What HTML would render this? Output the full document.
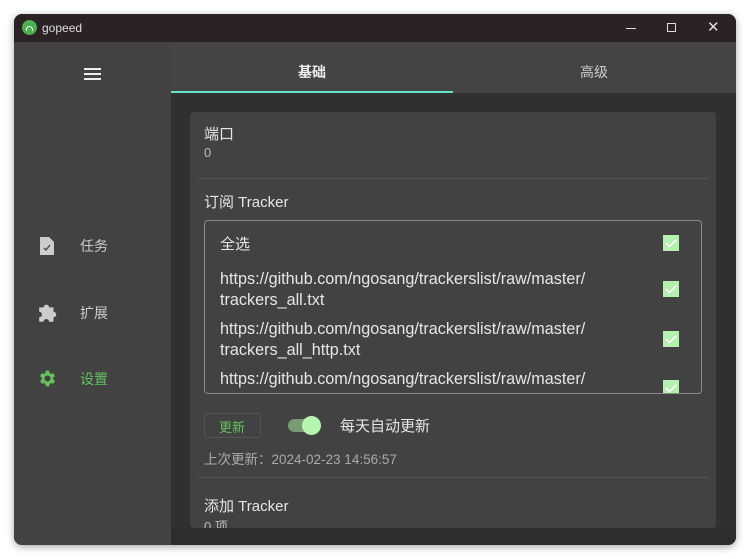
<!DOCTYPE html>
<html><head><meta charset="utf-8"><style>
*{margin:0;padding:0;box-sizing:border-box}
body{width:750px;height:559px;background:#fff;position:relative;overflow:hidden;font-family:"Liberation Sans","Noto Sans CJK SC",sans-serif;color:#e6e6e6}
.abs{position:absolute}
.win{left:14px;top:14px;width:722px;height:531px;border-radius:8px;overflow:hidden;background:#303030;box-shadow:0 2px 8px rgba(0,0,0,.35)}
.title{left:0;top:0;width:722px;height:28px;background:#2b2225}
.side{left:0;top:28px;width:157px;height:503px;background:#424242}
.tabs{left:157px;top:28px;width:565px;height:51px;background:#444}
.card{left:176px;top:98px;width:526px;height:416px;background:#424242;border-radius:4px;overflow:hidden}
.t{position:absolute;white-space:nowrap}
.cb{position:absolute;width:16px;height:16px;background:#b6f0b0;left:462px}
.cb svg{display:block}
.url{font-size:16.2px;line-height:21px}
</style></head><body>
<div class="abs win">
 <div class="abs title">
  <div class="abs" style="left:8px;top:6px;width:15px;height:15px;border-radius:50%;background:#4caf50"></div>
  <div class="abs" style="left:12px;top:12px;width:7px;height:5px;border:1.5px solid #fff;border-bottom:none;border-radius:4px 4px 0 0"></div>
  <div class="t" style="left:28px;top:7px;font-size:12px;color:#ddd">gopeed</div>
  <div class="abs" style="left:612px;top:14px;width:10px;height:1px;background:#ddd"></div>
  <div class="abs" style="left:653px;top:9px;width:9px;height:9px;border:1px solid #ddd"></div>
  <div class="t" style="left:693px;top:4px;font-size:15px;color:#ddd">✕</div>
 </div>
 <div class="abs side">
  <div class="abs" style="left:70px;top:26px;width:17px;height:2px;background:#eee;box-shadow:0 5px 0 #eee,0 10px 0 #eee"></div>
  <svg class="abs" style="left:25px;top:194px" width="16" height="20" viewBox="0 0 16 20"><path d="M1 1h9l5 5v13H1z" fill="#ccc"/><path d="M5 12l2 2 4-5" stroke="#424242" stroke-width="1.3" fill="none"/></svg>
  <div class="t" style="left:66px;top:194px;font-size:14px;color:#ccc">任务</div>
  <svg class="abs" style="left:23px;top:261px" width="22" height="22" viewBox="0 0 20 20"><path d="M2 6h4a2.5 2.5 0 0 1 5 0h4v4a2.5 2.5 0 0 1 0 5v4h-4a2.5 2.5 0 0 0-5 0H2v-4a2.5 2.5 0 0 0 0-5z" fill="#ccc" transform="translate(0,-2)"/></svg>
  <div class="t" style="left:66px;top:261px;font-size:14px;color:#ccc">扩展</div>
  <svg class="abs" style="left:23px;top:326px" width="21" height="21" viewBox="0 0 24 24"><path fill="#66c15e" d="M19.4 13a7.5 7.5 0 0 0 0-2l2.1-1.6-2-3.5-2.5 1a7.3 7.3 0 0 0-1.7-1L15 3h-4l-.4 2.9a7.3 7.3 0 0 0-1.7 1l-2.5-1-2 3.5L6.6 11a7.5 7.5 0 0 0 0 2l-2.1 1.6 2 3.5 2.5-1c.5.4 1.1.7 1.7 1L11 21h4l.4-2.9c.6-.3 1.200-.6 1.7-1l2.5 1 2-3.5zM13 15.5a3.5 3.5 0 1 1 0-7 3.5 3.5 0 0 1 0 7z" transform="translate(-1,0)"/></svg>
  <div class="t" style="left:66px;top:327px;font-size:14px;color:#66c15e">设置</div>
 </div>
 <div class="abs tabs">
  <div class="t" style="left:127px;top:20px;font-size:14px;color:#eee;font-weight:bold">基础</div>
  <div class="t" style="left:409px;top:20px;font-size:14px;color:#ccc">高级</div>
  <div class="abs" style="left:0;top:49px;width:282px;height:2px;background:#5fe3c0"></div>
 </div>
 <div class="abs card">
  <div class="t" style="left:14px;top:11px;font-size:15px">端口</div>
  <div class="t" style="left:14px;top:33px;font-size:13px;color:#bbb">0</div>
  <div class="abs" style="left:8px;top:66px;width:510px;height:1px;background:#555"></div>
  <div class="t" style="left:14px;top:79px;font-size:15px">订阅 Tracker</div>
  <div class="abs" style="left:14px;top:108px;width:498px;height:174px;border:1px solid #8a8a8a;border-radius:4px;overflow:hidden">
   <div class="t" style="left:15px;top:12px;font-size:15px">全选</div>
   <div class="t url" style="left:15px;top:48px">https://github.com/ngosang/trackerslist/raw/master/<br>trackers_all.txt</div>
   <div class="t url" style="left:15px;top:98px">https://github.com/ngosang/trackerslist/raw/master/<br>trackers_all_http.txt</div>
   <div class="t url" style="left:15px;top:148px">https://github.com/ngosang/trackerslist/raw/master/</div>
   <div class="cb" style="left:458px;top:14px"><svg width="16" height="16"><path d="M3 8l3.5 3.5L13 5" stroke="#fff" stroke-width="1.5" fill="none"/></svg></div>
   <div class="cb" style="left:458px;top:60px"><svg width="16" height="16"><path d="M3 8l3.5 3.5L13 5" stroke="#fff" stroke-width="1.5" fill="none"/></svg></div>
   <div class="cb" style="left:458px;top:110px"><svg width="16" height="16"><path d="M3 8l3.5 3.5L13 5" stroke="#fff" stroke-width="1.5" fill="none"/></svg></div>
   <div class="cb" style="left:458px;top:159px"><svg width="16" height="16"><path d="M3 8l3.5 3.5L13 5" stroke="#fff" stroke-width="1.5" fill="none"/></svg></div>
  </div>
  <div class="abs" style="left:14px;top:301px;width:57px;height:25px;border:1px solid #555;border-radius:3px"></div>
  <div class="t" style="left:29px;top:305px;font-size:13px;color:#66c15e">更新</div>
  <div class="abs" style="left:98px;top:307px;width:30px;height:13px;border-radius:7px;background:#7a9a74"></div>
  <div class="abs" style="left:112px;top:304px;width:19px;height:19px;border-radius:50%;background:#b6f7b0"></div>
  <div class="t" style="left:150px;top:303px;font-size:15px">每天自动更新</div>
  <div class="t" style="left:14px;top:336px;font-size:13.5px;color:#aaa">上次更新：2024-02-23 14:56:57</div>
  <div class="abs" style="left:8px;top:365px;width:510px;height:1px;background:#555"></div>
  <div class="t" style="left:14px;top:383px;font-size:15px">添加 Tracker</div>
  <div class="t" style="left:14px;top:404px;font-size:13px;color:#bbb">0 项</div>
 </div>
 <div class="abs" style="left:157px;top:514px;width:565px;height:17px;background:#2d2d2d"></div>
</div>
</body></html>
